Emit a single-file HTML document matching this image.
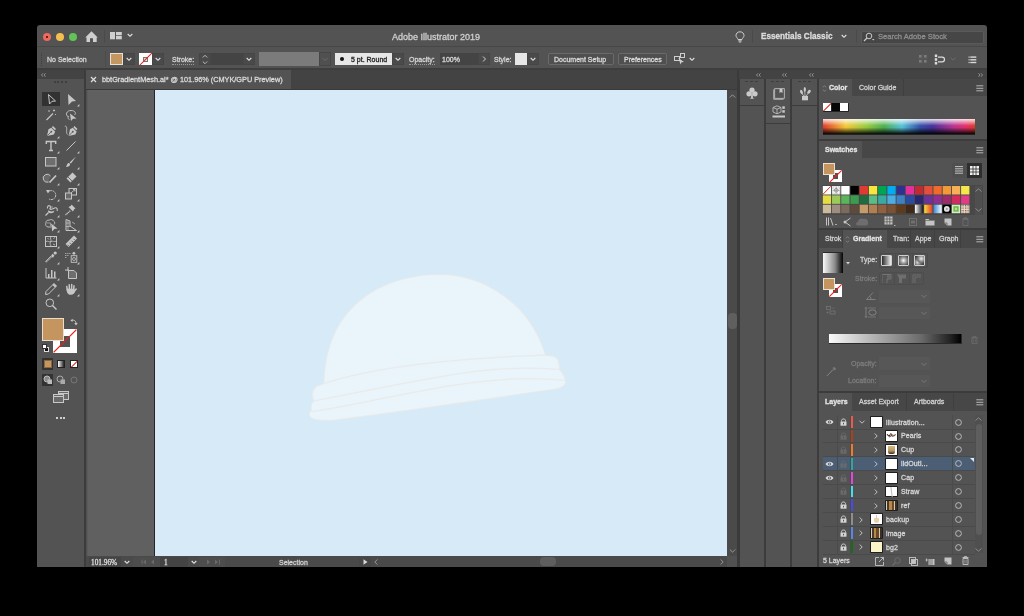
<!DOCTYPE html>
<html><head><meta charset="utf-8">
<style>
*{margin:0;padding:0;box-sizing:border-box}
html,body{width:1024px;height:616px;background:#000;overflow:hidden;font-family:"Liberation Sans",sans-serif;color:#d8d8d8}
.a{position:absolute}
.t{position:absolute;white-space:nowrap;font-size:7px;line-height:8px;will-change:transform;-webkit-text-stroke:0.3px currentColor}
svg{position:absolute;overflow:visible}
.dd{position:absolute;background:#4a4a4a;border:1px solid #464646}
.chev{position:absolute;width:4px;height:4px;border-right:1px solid #d0d0d0;border-bottom:1px solid #d0d0d0;transform:rotate(45deg)}
</style></head><body>
<!-- WINDOW BASE -->
<div class="a" style="left:37px;top:25px;width:950px;height:542px;background:#535353;border-radius:3px 3px 0 0"></div>

<!-- ============ TITLE BAR ============ -->
<div class="a" style="left:37px;top:46px;width:950px;height:1px;background:#474747"></div>
<div class="a" style="left:43px;top:33px;width:8px;height:8px;border-radius:50%;background:#ec6a5e"></div>
<div class="a" style="left:46px;top:36px;width:2px;height:2px;border-radius:50%;background:#4d0000"></div>
<div class="a" style="left:56px;top:33px;width:8px;height:8px;border-radius:50%;background:#f4bf4f"></div>
<div class="a" style="left:69px;top:33px;width:8px;height:8px;border-radius:50%;background:#61c454"></div>
<svg style="left:85px;top:31px" width="13" height="12" viewBox="0 0 13 12"><path d="M6.5 0.2 L12.7 6.5 L11.7 6.5 L11.7 11 L8 11 L8 7.2 L5 7.2 L5 11 L1.5 11 L1.5 6.5 L0.3 6.5 Z" fill="#cfcfcf"/></svg>
<div class="a" style="left:104px;top:30px;width:1px;height:13px;background:#4a4a4a"></div>
<svg style="left:110px;top:32px" width="12" height="8" viewBox="0 0 12 8"><rect x="0" y="0" width="5" height="7.3" fill="#cfcfcf"/><rect x="6" y="0" width="5.8" height="3.3" fill="#cfcfcf"/><rect x="6" y="4" width="5.8" height="3.3" fill="#cfcfcf"/></svg>
<svg style="left:127px;top:33px" width="6" height="5" viewBox="0 0 6 5"><path d="M0.7 1 L3 3.3 L5.3 1" stroke="#e2e2e2" stroke-width="1.15" fill="none"/></svg>
<div class="t" style="left:392px;top:31.8px;font-size:9px;line-height:11px;color:#cfcfcf">Adobe Illustrator 2019</div>
<!-- lightbulb -->
<svg style="left:735px;top:31px" width="10" height="12" viewBox="0 0 10 12"><path d="M5 0.8 C2.5 0.8 1 2.6 1 4.5 C1 6.2 2.6 7 3 8.5 L7 8.5 C7.4 7 9 6.2 9 4.5 C9 2.6 7.5 0.8 5 0.8 Z" stroke="#cfcfcf" stroke-width="1" fill="none"/><path d="M3.3 9.8 L6.7 9.8 M3.8 11 L6.2 11" stroke="#cfcfcf" stroke-width="1"/></svg>
<div class="a" style="left:752px;top:30px;width:1px;height:13px;background:#4a4a4a"></div>
<div class="t" style="left:761px;top:32.3px;font-size:8.2px;line-height:10px;font-weight:700;color:#dcdcdc">Essentials Classic</div>
<svg style="left:841px;top:34px" width="6" height="5" viewBox="0 0 6 5"><path d="M0.7 1 L3 3.3 L5.3 1" stroke="#e2e2e2" stroke-width="1.15" fill="none"/></svg>
<div class="a" style="left:856px;top:30px;width:1px;height:13px;background:#4a4a4a"></div>
<div class="a" style="left:861px;top:30.7px;width:122.5px;height:13px;background:#464646;border:1px solid #5a5a5a;border-radius:2px"></div>
<svg style="left:863px;top:32px" width="12" height="10" viewBox="0 0 12 10"><circle cx="6" cy="4" r="2.8" stroke="#c8c8c8" stroke-width="1" fill="none"/><path d="M4 6 L1 9" stroke="#c8c8c8" stroke-width="1.2"/><path d="M9 7 L11.5 7 L10.25 8.5 Z" fill="#c8c8c8"/></svg>
<div class="t" style="left:878px;top:32px;font-size:7.6px;line-height:10px;color:#8e8e8e">Search Adobe Stock</div>

<!-- ============ CONTROL BAR ============ -->
<div class="a" style="left:37px;top:68.3px;width:950px;height:1.8px;background:#3e3e3e"></div>
<div class="a" style="left:41px;top:53px;width:1px;height:13px;border-left:1px dotted #3e3e3e"></div>
<div class="t" style="left:47px;top:55.7px;color:#d4d4d4">No Selection</div>
<div class="a" style="left:105px;top:51px;width:1px;height:16px;background:#4c4c4c"></div>
<!-- fill -->
<div class="a" style="left:110px;top:53px;width:13px;height:12px;background:#c3975f;border:1px solid #e8e0d6"></div>
<div class="dd" style="left:123px;top:53px;width:12px;height:12px"></div>
<svg style="left:126px;top:57px" width="6" height="5" viewBox="0 0 6 5"><path d="M0.7 1 L3 3.3 L5.3 1" stroke="#e2e2e2" stroke-width="1.15" fill="none"/></svg>
<!-- stroke none -->
<div class="a" style="left:139px;top:53px;width:13px;height:12px;background:#fff;overflow:hidden">
 <div class="a" style="left:4px;top:3.5px;width:5px;height:5px;border:1px solid #777;background:#ddd"></div>
 <div class="a" style="left:-3px;top:5.5px;width:19px;height:1.2px;background:#e8231c;transform:rotate(-45deg)"></div>
</div>
<div class="dd" style="left:152px;top:53px;width:12px;height:12px"></div>
<svg style="left:155px;top:57px" width="6" height="5" viewBox="0 0 6 5"><path d="M0.7 1 L3 3.3 L5.3 1" stroke="#e2e2e2" stroke-width="1.15" fill="none"/></svg>
<div class="t" style="left:171.5px;top:55.7px;color:#d4d4d4;border-bottom:1px dotted #9a9a9a;line-height:8px">Stroke:</div>
<!-- stroke weight -->
<div class="dd" style="left:199px;top:53px;width:12px;height:12px"></div>
<svg style="left:202px;top:54px" width="6" height="11" viewBox="0 0 6 11"><path d="M0.8 3.5 L3 1.3 L5.2 3.5 M0.8 7.5 L3 9.7 L5.2 7.5" stroke="#c8c8c8" stroke-width="0.9" fill="none"/></svg>
<div class="a" style="left:211px;top:53px;width:32px;height:12px;background:#444"></div>
<div class="dd" style="left:243px;top:53px;width:12px;height:12px"></div>
<svg style="left:246px;top:57px" width="6" height="5" viewBox="0 0 6 5"><path d="M0.7 1 L3 3.3 L5.3 1" stroke="#e2e2e2" stroke-width="1.15" fill="none"/></svg>
<!-- variable width (disabled) -->
<div class="a" style="left:259px;top:52px;width:60px;height:14px;background:#7b7b7b"></div>
<div class="dd" style="left:319px;top:52px;width:12px;height:14px;background:#505050"></div>
<svg style="left:322px;top:57px" width="6" height="5" viewBox="0 0 6 5"><path d="M0.5 1 L3 3.5 L5.5 1" stroke="#6c6c6c" stroke-width="1" fill="none"/></svg>
<!-- brush -->
<div class="a" style="left:335px;top:53px;width:57px;height:12px;background:#e6e6e6"></div>
<div class="a" style="left:339.5px;top:57px;width:4px;height:4px;border-radius:50%;background:#111"></div>
<div class="t" style="left:351px;top:55.7px;color:#222">5 pt. Round</div>
<div class="dd" style="left:392px;top:53px;width:12px;height:12px"></div>
<svg style="left:395px;top:57px" width="6" height="5" viewBox="0 0 6 5"><path d="M0.7 1 L3 3.3 L5.3 1" stroke="#e2e2e2" stroke-width="1.15" fill="none"/></svg>
<div class="t" style="left:409px;top:55.7px;color:#d4d4d4;border-bottom:1px dotted #9a9a9a">Opacity:</div>
<div class="a" style="left:440px;top:53px;width:38px;height:12px;background:#444"></div>
<div class="t" style="left:442px;top:55.7px;color:#d8d8d8">100%</div>
<div class="dd" style="left:478px;top:53px;width:12px;height:12px"></div>
<svg style="left:482px;top:56px" width="5" height="6" viewBox="0 0 5 6"><path d="M1 0.5 L3.5 3 L1 5.5" stroke="#d0d0d0" stroke-width="1" fill="none"/></svg>
<div class="t" style="left:493.5px;top:55.7px;color:#d4d4d4">Style:</div>
<div class="a" style="left:515px;top:53px;width:12px;height:12px;background:#e6e6e6"></div>
<div class="dd" style="left:527px;top:53px;width:12px;height:12px"></div>
<svg style="left:530px;top:57px" width="6" height="5" viewBox="0 0 6 5"><path d="M0.7 1 L3 3.3 L5.3 1" stroke="#e2e2e2" stroke-width="1.15" fill="none"/></svg>
<div class="a" style="left:547.5px;top:53px;width:66px;height:12px;border:1px solid #6a6a6a;border-radius:2px;background:#4f4f4f"></div>
<div class="t" style="left:554px;top:55.7px;color:#d8d8d8">Document Setup</div>
<div class="a" style="left:617.5px;top:53px;width:49px;height:12px;border:1px solid #6a6a6a;border-radius:2px;background:#4f4f4f"></div>
<div class="t" style="left:623.5px;top:55.7px;color:#d8d8d8">Preferences</div>
<svg style="left:674px;top:53px" width="12" height="12" viewBox="0 0 12 12"><rect x="0.5" y="3.5" width="5" height="4" stroke="#cfcfcf" fill="none"/><rect x="6.5" y="0.5" width="4" height="4" stroke="#cfcfcf" fill="none"/><path d="M4.5 5 L10 9 L7.5 9.3 L6.5 11.5 Z" fill="#cfcfcf"/></svg>
<svg style="left:689px;top:57px" width="6" height="5" viewBox="0 0 6 5"><path d="M0.7 1 L3 3.3 L5.3 1" stroke="#e2e2e2" stroke-width="1.15" fill="none"/></svg>
<!-- right control icons -->
<svg style="left:918px;top:54px" width="10" height="10" viewBox="0 0 10 10"><g fill="#7c7c7c"><rect x="1" y="1" width="2.6" height="2.6"/><rect x="6" y="1" width="2.6" height="2.6"/><rect x="1" y="6" width="2.6" height="2.6"/><rect x="6" y="6" width="2.6" height="2.6"/></g><path d="M4.8 0V10M0 4.8H10" stroke="#5e5e5e" stroke-width="0.5"/></svg>
<svg style="left:934px;top:53.5px" width="13" height="11" viewBox="0 0 13 11"><g fill="#dcdcdc"><rect x="0.8" y="0.5" width="2.4" height="2.6"/><rect x="0.8" y="4.2" width="2.4" height="2.6"/><rect x="0.8" y="7.9" width="2.4" height="2.6"/></g><path d="M4 3.2 H8.2 A2.3 2.3 0 0 1 8.2 7.8 H4" stroke="#dcdcdc" stroke-width="1.2" fill="none"/></svg>
<svg style="left:950px;top:57px" width="6" height="4" viewBox="0 0 6 4"><path d="M0.5 0.7 L3 3 L5.5 0.7" stroke="#767676" stroke-width="0.7" fill="none"/></svg>
<svg style="left:967.5px;top:55.5px" width="9" height="8" viewBox="0 0 9 8"><g fill="#d8d8d8"><rect x="0.5" y="0.5" width="1.2" height="1.2"/><rect x="0.5" y="3.2" width="1.2" height="1.2"/><rect x="0.5" y="5.9" width="1.2" height="1.2"/><rect x="2.3" y="0.4" width="6" height="1.4"/><rect x="2.3" y="3.1" width="6" height="1.4"/><rect x="2.3" y="5.8" width="6" height="1.4"/></g></svg>

<!-- ============ LEFT TOOLBAR ============ -->
<div class="a" style="left:37px;top:70px;width:47px;height:9px;background:#434343"></div>

<div class="a" style="left:84px;top:70px;width:2px;height:497px;background:#3c3c3c"></div>
<div class="a" style="left:42px;top:92px;width:18px;height:14px;background:#323232"></div>
<svg style="left:43.5px;top:92.0px" width="14" height="14" viewBox="0 0 14 14"><path d="M4.5 2.5 L11.5 9 L8 9.3 L5.5 12 Z" stroke="#c6c6c6" stroke-width="1" fill="none" stroke-linejoin="miter"/></svg>
<svg style="left:63.5px;top:92.0px" width="14" height="14" viewBox="0 0 14 14"><path d="M4 2 L12 9 L8 9.5 L4.5 13 Z" fill="#c6c6c6"/></svg>
<svg style="left:76.9px;top:103.9px" width="2.4" height="2.4" viewBox="0 0 3 3"><path d="M3 0 L3 3 L0 3 Z" fill="#c8c8c8"/></svg>
<svg style="left:43.5px;top:107.8px" width="14" height="14" viewBox="0 0 14 14"><path d="M2.5 12 L9 5.5" stroke="#c6c6c6" stroke-width="1.3"/><path d="M4.5 2.5 L5.5 3.5 M5.5 2.5 L4.5 3.5 M10 1.5 L10 3.5 M9 2.5 L11 2.5 M11 6 L12 7" stroke="#c6c6c6" stroke-width="0.9"/></svg>
<svg style="left:63.5px;top:107.8px" width="14" height="14" viewBox="0 0 14 14"><path d="M4 8.5 C1 7 2.5 2.5 7 2.5 C11 2.5 12.5 5 10.5 7" stroke="#c6c6c6" stroke-width="0.9" fill="none"/><path d="M4.5 8 C3.5 10 4.5 11.5 5.5 11.5" stroke="#c6c6c6" stroke-width="0.9" fill="none"/><path d="M6 5.5 L12.5 10.5 L9 10.8 L7 13 Z" fill="#c6c6c6"/></svg>
<svg style="left:43.5px;top:123.6px" width="14" height="14" viewBox="0 0 14 14"><path d="M9 2 L12 5 L10.8 6.2 L7.8 3.2 Z" fill="#c6c6c6"/><path d="M7.3 3.8 L11.2 7.7 L9.8 10.5 L3 12 L4.5 5.2 Z" fill="#c6c6c6"/><path d="M3.2 11.8 L6.8 8.2" stroke="#535353" stroke-width="0.8"/><circle cx="7.3" cy="7.7" r="0.9" fill="#535353"/></svg>
<svg style="left:56.9px;top:135.5px" width="2.4" height="2.4" viewBox="0 0 3 3"><path d="M3 0 L3 3 L0 3 Z" fill="#c8c8c8"/></svg>
<svg style="left:63.5px;top:123.6px" width="14" height="14" viewBox="0 0 14 14"><g transform="translate(1.5,0)"><path d="M9 2 L12 5 L10.8 6.2 L7.8 3.2 Z" fill="#c6c6c6"/><path d="M7.3 3.8 L11.2 7.7 L9.8 10.5 L3 12 L4.5 5.2 Z" fill="#c6c6c6"/><path d="M3.2 11.8 L6.8 8.2" stroke="#535353" stroke-width="0.8"/><circle cx="7.3" cy="7.7" r="0.9" fill="#535353"/></g><path d="M3.5 10.5 C1.5 9 3.5 5.5 2.5 3 C2 1.8 1 2 0.8 2.5" stroke="#c6c6c6" stroke-width="0.8" fill="none"/></svg>
<svg style="left:43.5px;top:139.4px" width="14" height="14" viewBox="0 0 14 14"><path d="M2.3 5 L2.3 2.5 L11.7 2.5 L11.7 5 M7 2.5 L7 11.5 M5 11.5 L9 11.5" stroke="#c6c6c6" stroke-width="1.4" fill="none"/></svg>
<svg style="left:56.9px;top:151.3px" width="2.4" height="2.4" viewBox="0 0 3 3"><path d="M3 0 L3 3 L0 3 Z" fill="#c8c8c8"/></svg>
<svg style="left:63.5px;top:139.4px" width="14" height="14" viewBox="0 0 14 14"><path d="M2.5 11.5 L11.5 2.5" stroke="#c6c6c6" stroke-width="1"/></svg>
<svg style="left:76.9px;top:151.3px" width="2.4" height="2.4" viewBox="0 0 3 3"><path d="M3 0 L3 3 L0 3 Z" fill="#c8c8c8"/></svg>
<svg style="left:43.5px;top:155.2px" width="14" height="14" viewBox="0 0 14 14"><rect x="1.5" y="2.5" width="10.5" height="8.5" stroke="#c6c6c6" stroke-width="1" fill="#6e6e6e"/></svg>
<svg style="left:56.9px;top:167.1px" width="2.4" height="2.4" viewBox="0 0 3 3"><path d="M3 0 L3 3 L0 3 Z" fill="#c8c8c8"/></svg>
<svg style="left:63.5px;top:155.2px" width="14" height="14" viewBox="0 0 14 14"><path d="M12 1.5 L7 8.5 L5.5 7.5 Z" fill="#c6c6c6"/><path d="M5 8 C3 8 3 10.5 2 12 C4 12 6.5 11 6 9 Z" fill="#c6c6c6"/></svg>
<svg style="left:76.9px;top:167.1px" width="2.4" height="2.4" viewBox="0 0 3 3"><path d="M3 0 L3 3 L0 3 Z" fill="#c8c8c8"/></svg>
<svg style="left:43.5px;top:171.0px" width="14" height="14" viewBox="0 0 14 14"><path d="M6.5 5 A4 4 0 1 0 4.5 11" stroke="#c6c6c6" stroke-width="1" fill="#6a6a6a"/><path d="M12 4.5 L5.5 11.5" stroke="#c6c6c6" stroke-width="1.8"/></svg>
<svg style="left:56.9px;top:182.9px" width="2.4" height="2.4" viewBox="0 0 3 3"><path d="M3 0 L3 3 L0 3 Z" fill="#c8c8c8"/></svg>
<svg style="left:63.5px;top:171.0px" width="14" height="14" viewBox="0 0 14 14"><path d="M8.5 1.5 L12.5 5.5 L6.5 11.5 L2.5 7.5 Z" fill="#c6c6c6"/><path d="M4 6 L8 10" stroke="#535353" stroke-width="0.8"/></svg>
<svg style="left:76.9px;top:182.9px" width="2.4" height="2.4" viewBox="0 0 3 3"><path d="M3 0 L3 3 L0 3 Z" fill="#c8c8c8"/></svg>
<svg style="left:43.5px;top:186.8px" width="14" height="14" viewBox="0 0 14 14"><path d="M4 5 A4.5 4.5 0 1 1 5 12" stroke="#c6c6c6" stroke-width="1" fill="none" stroke-dasharray="2 0.6"/><path d="M2 3 L6 3 L4 6.5 Z" fill="#c6c6c6"/></svg>
<svg style="left:56.9px;top:198.7px" width="2.4" height="2.4" viewBox="0 0 3 3"><path d="M3 0 L3 3 L0 3 Z" fill="#c8c8c8"/></svg>
<svg style="left:63.5px;top:186.8px" width="14" height="14" viewBox="0 0 14 14"><rect x="5" y="1.5" width="7.5" height="6.5" stroke="#c6c6c6" fill="none"/><rect x="1.5" y="6" width="6" height="6" stroke="#c6c6c6" fill="#6a6a6a"/><path d="M7 6 L11 2.5 M9 2.5 L11 2.5 L11 4.5" stroke="#c6c6c6" stroke-width="0.9" fill="none"/></svg>
<svg style="left:76.9px;top:198.7px" width="2.4" height="2.4" viewBox="0 0 3 3"><path d="M3 0 L3 3 L0 3 Z" fill="#c8c8c8"/></svg>
<svg style="left:43.5px;top:202.6px" width="14" height="14" viewBox="0 0 14 14"><path d="M3.5 5.5 C3 3.5 4.5 2 6 3 C6.8 3.6 6.5 5 5.8 5.8 C7.5 7.5 9.5 5.2 11.3 4.8 C13 4.5 13.8 6.5 13 8" stroke="#c6c6c6" stroke-width="1.1" fill="none"/><path d="M4.5 7 C6 9 8.5 8.5 10.5 7.5 L9.5 9.5 C7.5 10.5 5.5 10.5 4 9 Z" fill="#c6c6c6"/><path d="M1.5 12.5 L4.5 9.5" stroke="#c6c6c6" stroke-width="1.2"/><circle cx="8" cy="4" r="0.7" fill="#c6c6c6"/></svg>
<svg style="left:56.9px;top:214.5px" width="2.4" height="2.4" viewBox="0 0 3 3"><path d="M3 0 L3 3 L0 3 Z" fill="#c8c8c8"/></svg>
<svg style="left:63.5px;top:202.6px" width="14" height="14" viewBox="0 0 14 14"><path d="M7.5 1.5 L11.5 5.5 L10.3 6 L9 8.5 L4.5 4 L7 2.7 Z" fill="#c6c6c6"/><path d="M6.3 7.7 L1.5 12" stroke="#c6c6c6" stroke-width="1.4" stroke-dasharray="1.2 0.6"/></svg>
<svg style="left:76.9px;top:214.5px" width="2.4" height="2.4" viewBox="0 0 3 3"><path d="M3 0 L3 3 L0 3 Z" fill="#c8c8c8"/></svg>
<svg style="left:43.5px;top:218.4px" width="14" height="14" viewBox="0 0 14 14"><path d="M2 5 C1.5 3 3.5 1.8 5 2.2 C6.5 1 9 1.5 9.7 3.2 C11 3.8 11 5.6 10 6.5 M2 5 C1 6.5 2 8.8 4 9 L7 9" stroke="#c6c6c6" stroke-width="0.9" fill="none"/><path d="M3 5 H6.5 V8" stroke="#c6c6c6" stroke-width="0.6" fill="none"/><path d="M7 5.5 L13.5 10.5 L10.3 11 L8.3 13.5 Z" fill="#c6c6c6"/></svg>
<svg style="left:56.9px;top:230.3px" width="2.4" height="2.4" viewBox="0 0 3 3"><path d="M3 0 L3 3 L0 3 Z" fill="#c8c8c8"/></svg>
<svg style="left:63.5px;top:218.4px" width="14" height="14" viewBox="0 0 14 14"><path d="M2 1.5 L2 12.5 L12.5 12.5 L6 8 L6 3 Z" stroke="#c6c6c6" fill="none"/><path d="M2 5 L6 5 M2 8.5 L6 8.5 M4 2 L4 12.5" stroke="#c6c6c6" stroke-width="0.7"/><path d="M8 4 L11 6" stroke="#c6c6c6" stroke-width="0.7"/></svg>
<svg style="left:76.9px;top:230.3px" width="2.4" height="2.4" viewBox="0 0 3 3"><path d="M3 0 L3 3 L0 3 Z" fill="#c8c8c8"/></svg>
<svg style="left:43.5px;top:234.2px" width="14" height="14" viewBox="0 0 14 14"><rect x="1.5" y="2.5" width="11" height="10" stroke="#c6c6c6" stroke-width="1" fill="none"/><path d="M2 7.5 C4 6.5 5 8.5 7 7.5 C9 6.5 10 8.5 12.5 7 M7 2.5 C5.5 4.5 8 6 6.5 8 C5 10 7.5 11 6.5 12.5 M3.5 4 L5 5.5 M9.5 4.5 L11 3.5 M9 10 L11 11" stroke="#c6c6c6" stroke-width="0.8" fill="none"/></svg>
<svg style="left:56.9px;top:246.1px" width="2.4" height="2.4" viewBox="0 0 3 3"><path d="M3 0 L3 3 L0 3 Z" fill="#c8c8c8"/></svg>
<svg style="left:63.5px;top:234.2px" width="14" height="14" viewBox="0 0 14 14"><path d="M1.5 10 L10 1.5 L13 4.5 L4.5 13 Z" fill="#c6c6c6"/><path d="M3.6 10.8 L4.6 11.8 M5.6 8.8 L6.6 9.8 M7.6 6.8 L8.6 7.8 M9.6 4.8 L10.6 5.8" stroke="#535353" stroke-width="1"/></svg>
<svg style="left:76.9px;top:246.1px" width="2.4" height="2.4" viewBox="0 0 3 3"><path d="M3 0 L3 3 L0 3 Z" fill="#c8c8c8"/></svg>
<svg style="left:43.5px;top:250.0px" width="14" height="14" viewBox="0 0 14 14"><circle cx="11.2" cy="3" r="1.6" fill="#c6c6c6"/><path d="M8.2 4.2 L10 6 M7.6 5.5 L9.4 7.3" stroke="#c6c6c6" stroke-width="1.3"/><path d="M8.3 6.2 L2.6 11.9 C2 12.5 1.3 11.8 1.9 11.2 L7.6 5.5" stroke="#c6c6c6" stroke-width="0.9" fill="none"/></svg>
<svg style="left:56.9px;top:261.9px" width="2.4" height="2.4" viewBox="0 0 3 3"><path d="M3 0 L3 3 L0 3 Z" fill="#c8c8c8"/></svg>
<svg style="left:63.5px;top:250.0px" width="14" height="14" viewBox="0 0 14 14"><g fill="#c6c6c6"><rect x="1.3" y="3" width="1" height="1"/><rect x="3.4" y="3" width="1" height="1"/><rect x="5.4" y="3" width="1" height="1"/><rect x="1.3" y="5" width="1" height="1"/><rect x="3.4" y="5" width="1" height="1"/><rect x="1.3" y="7" width="1" height="1"/></g><rect x="7.2" y="5.7" width="5.6" height="6.6" stroke="#c6c6c6" stroke-width="0.9" fill="none"/><circle cx="9.9" cy="3.3" r="1.4" fill="#c6c6c6"/><circle cx="10" cy="9" r="1.5" stroke="#c6c6c6" stroke-width="0.8" fill="none"/></svg>
<svg style="left:76.9px;top:261.9px" width="2.4" height="2.4" viewBox="0 0 3 3"><path d="M3 0 L3 3 L0 3 Z" fill="#c8c8c8"/></svg>
<svg style="left:43.5px;top:265.8px" width="14" height="14" viewBox="0 0 14 14"><path d="M2 2 L2 12 L12.5 12" stroke="#c6c6c6" fill="none"/><rect x="4" y="8" width="1.5" height="4" fill="#c6c6c6"/><rect x="7" y="4" width="1.5" height="8" fill="#c6c6c6"/><rect x="10" y="5.5" width="1.5" height="6.5" fill="#c6c6c6"/></svg>
<svg style="left:56.9px;top:277.7px" width="2.4" height="2.4" viewBox="0 0 3 3"><path d="M3 0 L3 3 L0 3 Z" fill="#c8c8c8"/></svg>
<svg style="left:63.5px;top:265.8px" width="14" height="14" viewBox="0 0 14 14"><path d="M4 1 L4 5 M1 4 L5 4" stroke="#c6c6c6"/><path d="M4.5 4.5 L10 4.5 L12.5 7 L12.5 12.5 L4.5 12.5 Z" stroke="#c6c6c6" fill="#6e6e6e"/></svg>
<svg style="left:43.5px;top:281.6px" width="14" height="14" viewBox="0 0 14 14"><path d="M10 1.5 L12.5 4 L4.5 12 L1.5 12.5 L2 9.5 Z" stroke="#c6c6c6" fill="none"/><path d="M8.5 3 L11 5.5 L12.5 4 L10 1.5 Z" fill="#c6c6c6"/></svg>
<svg style="left:56.9px;top:293.5px" width="2.4" height="2.4" viewBox="0 0 3 3"><path d="M3 0 L3 3 L0 3 Z" fill="#c8c8c8"/></svg>
<svg style="left:63.5px;top:281.6px" width="14" height="14" viewBox="0 0 14 14"><g stroke="#c6c6c6" stroke-width="1.5" stroke-linecap="round"><path d="M3.3 8 L2.8 4.5"/><path d="M5.4 7 L5.2 2.8"/><path d="M7.6 7 L7.7 2.5"/><path d="M9.7 7.5 L10 3.8"/><path d="M10.5 9 L12.2 7"/></g><path d="M2.6 6.5 C2.6 9.5 3 12.8 6.8 12.8 C9.5 12.8 10.5 11 11.2 9.5 L10.3 7 L2.6 6.5 Z" fill="#c6c6c6"/></svg>
<svg style="left:76.9px;top:293.5px" width="2.4" height="2.4" viewBox="0 0 3 3"><path d="M3 0 L3 3 L0 3 Z" fill="#c8c8c8"/></svg>
<svg style="left:43.5px;top:297.4px" width="14" height="14" viewBox="0 0 14 14"><circle cx="5.8" cy="5.8" r="3.8" stroke="#c6c6c6" stroke-width="1" fill="none"/><path d="M8.5 8.5 L12.5 12.5" stroke="#c6c6c6" stroke-width="1.5"/></svg>
<!-- grip -->
<div class="a" style="left:54px;top:81px;width:13px;height:2px;border-top:2px dotted #3f3f3f"></div>
<!-- fill/stroke big -->
<div class="a" style="left:53px;top:329px;width:23.5px;height:23.5px;background:#fff"></div>
<div class="a" style="left:59.5px;top:336px;width:10.5px;height:10.5px;background:#535353"></div>
<svg style="left:53px;top:329px" width="24" height="24" viewBox="0 0 24 24"><path d="M0.6 23.4 L23.4 0.6" stroke="#e5231d" stroke-width="1.3"/></svg>
<div class="a" style="left:41.5px;top:318px;width:22.5px;height:22.5px;background:#c4955f;border:1px solid #e9ddcd"></div>
<svg style="left:70px;top:318px" width="8" height="8" viewBox="0 0 8 8"><path d="M1.5 2.5 C3.5 1.5 6 2.5 6 5.5" stroke="#c8c8c8" stroke-width="1" fill="none"/><path d="M0.5 2.5 L2.5 0.8 L2.5 4 Z M4.3 5 L7.7 5 L6 7.5 Z" fill="#c8c8c8"/></svg>
<div class="a" style="left:44px;top:346.5px;width:5px;height:5px;background:#111;border:1px solid #ddd"></div>
<div class="a" style="left:41.5px;top:344px;width:5px;height:5px;background:#fff;border:1px solid #333"></div>
<!-- mode buttons -->
<div class="a" style="left:42px;top:358px;width:11px;height:12px;background:#333"></div>
<div class="a" style="left:43.5px;top:360px;width:8px;height:8px;background:#c4955f;border:1px solid #8a6a40"></div>
<div class="a" style="left:56.5px;top:360px;width:8px;height:8px;background:linear-gradient(90deg,#fff,#222);border:1px solid #222"></div>
<div class="a" style="left:69.5px;top:360px;width:8px;height:8px;background:#fff;border:1px solid #222;overflow:hidden"><div class="a" style="left:-2px;top:2.5px;width:10px;height:1px;background:#e5231d;transform:rotate(-45deg)"></div></div>
<!-- draw modes -->
<div class="a" style="left:42px;top:374px;width:11px;height:12px;background:#333"></div>
<svg style="left:43px;top:375px" width="10" height="10" viewBox="0 0 10 10"><circle cx="4" cy="4" r="3" stroke="#bbb" fill="#888"/><rect x="4.5" y="4.5" width="4.5" height="4.5" fill="#bbb"/></svg>
<svg style="left:56px;top:375px" width="10" height="10" viewBox="0 0 10 10"><circle cx="4" cy="4" r="3" stroke="#aaa" fill="none"/><rect x="4.5" y="4.5" width="4.5" height="4.5" fill="#aaa"/></svg>
<svg style="left:69px;top:375px" width="10" height="10" viewBox="0 0 10 10"><circle cx="5" cy="5" r="3" stroke="#777" fill="none"/></svg>
<!-- screen mode -->
<svg style="left:52.5px;top:390.5px" width="16" height="12" viewBox="0 0 16 12"><rect x="5.5" y="0.5" width="10" height="8" stroke="#c8c8c8" fill="#6a6a6a"/><rect x="0.5" y="3.5" width="10" height="8" stroke="#c8c8c8" fill="#6a6a6a"/><path d="M1 5.5 H10 M6 2.5 H15" stroke="#c8c8c8"/></svg>
<!-- dots -->
<div class="a" style="left:56px;top:417px;width:2px;height:2px;background:#d0d0d0"></div>
<div class="a" style="left:59.5px;top:417px;width:2px;height:2px;background:#d0d0d0"></div>
<div class="a" style="left:63px;top:417px;width:2px;height:2px;background:#d0d0d0"></div>


<!-- ============ DOC TAB BAR ============ -->
<div class="a" style="left:86px;top:70px;width:651px;height:19px;background:#434343"></div>
<div class="a" style="left:86px;top:70px;width:205px;height:19px;background:#535353"></div>
<div class="a" style="left:86px;top:89px;width:651px;height:1px;background:#3a3a3a"></div>
<svg style="left:90px;top:76px" width="7" height="7" viewBox="0 0 7 7"><path d="M1 1 L6 6 M6 1 L1 6" stroke="#e0e0e0" stroke-width="1.2"/></svg>
<div class="t" style="left:101.5px;top:76px;font-size:7.3px;color:#d8d8d8">bbtGradientMesh.ai* @ 101.96% (CMYK/GPU Preview)</div>

<!-- ============ CANVAS ============ -->
<div class="a" style="left:86px;top:90px;width:641px;height:466px;background:#606060"></div>
<div class="a" style="left:86px;top:90px;width:2px;height:466px;background:linear-gradient(90deg,#4a4a4a,#606060)"></div>
<div class="a" style="left:154px;top:90px;width:1px;height:466px;background:#262626"></div>
<div class="a" style="left:155px;top:90px;width:572px;height:466px;background:#d6eaf8"></div>
<div class="a" style="left:727px;top:90px;width:10px;height:466px;background:#4a4a4a"></div>
<div class="a" style="left:728px;top:313px;width:9px;height:16px;border-radius:4px;background:#5f5f5f"></div>
<!-- status bar -->
<div class="a" style="left:86px;top:556px;width:651px;height:11px;background:#4a4a4a"></div>
<div class="a" style="left:89px;top:556.5px;width:32px;height:10px;background:#444"></div>
<div class="t" style="left:90.5px;top:558.7px;font-size:7.3px;color:#dcdcdc;font-family:'Liberation Serif',serif">101.96%</div>
<svg style="left:124px;top:560px" width="6" height="5" viewBox="0 0 6 5"><path d="M0.7 1 L3 3.3 L5.3 1" stroke="#e2e2e2" stroke-width="1.15" fill="none"/></svg>
<div class="a" style="left:132.5px;top:556.5px;width:27px;height:10px;background:#4d4d4d"></div>
<svg style="left:141px;top:558.5px" width="15" height="6" viewBox="0 0 15 6"><rect x="0.5" y="0.5" width="1" height="5" fill="#6a6a6a"/><path d="M5 0.5 L2 3 L5 5.5Z M13 0.5 L10 3 L13 5.5Z" fill="#6a6a6a"/></svg>
<div class="a" style="left:160px;top:556.5px;width:28px;height:10px;background:#444"></div>
<div class="t" style="left:163.5px;top:558.7px;font-size:7.3px;color:#dcdcdc;font-family:'Liberation Serif',serif">1</div>
<svg style="left:190.5px;top:560px" width="6" height="5" viewBox="0 0 6 5"><path d="M0.7 1 L3 3.3 L5.3 1" stroke="#e2e2e2" stroke-width="1.15" fill="none"/></svg>
<div class="a" style="left:199px;top:556.5px;width:26px;height:10px;background:#4d4d4d"></div>
<svg style="left:206px;top:558.5px" width="15" height="6" viewBox="0 0 15 6"><path d="M1 0.5 L4 3 L1 5.5Z M9 0.5 L12 3 L9 5.5Z" fill="#6a6a6a"/><rect x="13" y="0.5" width="1" height="5" fill="#6a6a6a"/></svg>
<div class="t" style="left:278.5px;top:558.5px;color:#cfcfcf">Selection</div>
<div class="a" style="left:359px;top:556.5px;width:12px;height:10px;background:#474747"></div>
<svg style="left:362.5px;top:558.5px" width="5" height="6" viewBox="0 0 5 6"><path d="M0.5 0.3 L4.5 3 L0.5 5.7Z" fill="#d8d8d8"/></svg>
<svg style="left:374px;top:558.5px" width="4" height="6" viewBox="0 0 4 6"><path d="M3.3 0.5 L0.8 3 L3.3 5.5" stroke="#a0a0a0" stroke-width="0.9" fill="none"/></svg>
<div class="a" style="left:540px;top:557.3px;width:16px;height:8.5px;border-radius:4px;background:#5e5e5e"></div>
<svg style="left:720px;top:558.5px" width="4" height="6" viewBox="0 0 4 6"><path d="M0.7 0.5 L3.2 3 L0.7 5.5" stroke="#a0a0a0" stroke-width="0.9" fill="none"/></svg>
<div class="a" style="left:727px;top:556px;width:10px;height:11px;background:#515151"></div>
<svg style="left:729px;top:548.5px" width="7" height="4" viewBox="0 0 7 4"><path d="M0.8 0.5 L3.5 3.2 L6.2 0.5" stroke="#a0a0a0" stroke-width="0.9" fill="none"/></svg>
<svg style="left:729px;top:93.5px" width="7" height="4" viewBox="0 0 7 4"><path d="M0.8 3.5 L3.5 0.8 L6.2 3.5" stroke="#a0a0a0" stroke-width="0.9" fill="none"/></svg>
<!-- cap -->
<svg style="left:155px;top:90px" width="572" height="466" viewBox="155 90 572 466">
 <defs><filter id="bl" x="-5%" y="-5%" width="110%" height="110%"><feGaussianBlur stdDeviation="0.5"/></filter></defs>
 <g filter="url(#bl)" stroke="#e8e8e6" stroke-opacity="0.8" stroke-width="1.2" fill="#e9f4fb">
  <path d="M323.8 384.5 C325 294 398 274.3 439.7 274.3 C482 274.3 530 302 545.8 356 Z"/>
  <path d="M318 385.5 C370 368 440 359 545.5 355.2 C551 355.5 555 356 557 358.5 C559 361 559.5 366 559.5 369.5 C562 372 565 377 565.5 381 C566 385 562 388 556 389 C480 400 400 412 335 420 C322 421 311 420 309.5 416 C308.5 413 309.5 411 311.5 411 C310.5 406 311 403 314 401 C311.5 397 311 390 318 385.5 Z"/>
  <path d="M314 401 C444 375.5 489.5 363.5 559.5 369.5" fill="none"/>
  <path d="M311.5 411.5 C371.5 404.5 475 370.5 565 380.5" fill="none"/>
 </g>
</svg>

<!-- ============ DOCK + RIGHT ============ -->
<div class="a" style="left:819px;top:70px;width:168px;height:497px;background:#535353"></div>
<div class="a" style="left:740px;top:79px;width:77px;height:488px;background:#535353"></div>
<div class="a" style="left:737px;top:70px;width:3px;height:497px;background:#3a3a3a"></div>
<div class="a" style="left:739px;top:70px;width:80px;height:9px;background:#434343"></div>
<svg style="left:756.0px;top:72.8px" width="5" height="4" viewBox="0 0 5 4"><path d="M2 0.3 L0.5 2 L2 3.7 M4.5 0.3 L3 2 L4.5 3.7" stroke="#b0b0b0" stroke-width="0.7" fill="none"/></svg>
<svg style="left:782.0px;top:72.8px" width="5" height="4" viewBox="0 0 5 4"><path d="M2 0.3 L0.5 2 L2 3.7 M4.5 0.3 L3 2 L4.5 3.7" stroke="#b0b0b0" stroke-width="0.7" fill="none"/></svg>
<svg style="left:808.5px;top:72.8px" width="5" height="4" viewBox="0 0 5 4"><path d="M2 0.3 L0.5 2 L2 3.7 M4.5 0.3 L3 2 L4.5 3.7" stroke="#b0b0b0" stroke-width="0.7" fill="none"/></svg>
<svg style="left:977.5px;top:72.8px" width="5" height="4" viewBox="0 0 5 4"><path d="M0.5 0.3 L2 2 L0.5 3.7 M3 0.3 L4.5 2 L3 3.7" stroke="#b0b0b0" stroke-width="0.7" fill="none"/></svg>
<svg style="left:41.0px;top:72.8px" width="5" height="4" viewBox="0 0 5 4"><path d="M2 0.3 L0.5 2 L2 3.7 M4.5 0.3 L3 2 L4.5 3.7" stroke="#b0b0b0" stroke-width="0.7" fill="none"/></svg>
<div class="a" style="left:764px;top:79px;width:2px;height:488px;background:#3c3c3c"></div>
<div class="a" style="left:790px;top:79px;width:2.4px;height:488px;background:#3c3c3c"></div>
<div class="a" style="left:817px;top:79px;width:2px;height:488px;background:#3c3c3c"></div>
<div class="a" style="left:740px;top:105px;width:24px;height:1px;background:#3c3c3c"></div>
<div class="a" style="left:766px;top:123px;width:24px;height:1px;background:#3c3c3c"></div>
<div class="a" style="left:792px;top:105px;width:25px;height:1px;background:#3c3c3c"></div>
<div class="a" style="left:745px;top:81px;width:13px;height:2px;border-top:1.5px dashed #3e3e3e"></div>
<div class="a" style="left:771px;top:81px;width:13px;height:2px;border-top:1.5px dashed #3e3e3e"></div>
<div class="a" style="left:797.5px;top:81px;width:13px;height:2px;border-top:1.5px dashed #3e3e3e"></div>
<svg style="left:746px;top:87px" width="12" height="13" viewBox="0 0 12 13"><circle cx="6" cy="3.2" r="2.6" fill="#cacaca"/><circle cx="3" cy="6.8" r="2.6" fill="#cacaca"/><circle cx="9" cy="6.8" r="2.6" fill="#cacaca"/><path d="M5.3 6 L6.7 6 L7 11 L8.5 11.7 L3.5 11.7 L5 11 Z" fill="#cacaca"/></svg>
<svg style="left:773px;top:88px" width="12" height="12" viewBox="0 0 12 12"><path d="M0.7 1.5 L0.7 11.3 L10.5 11.3" stroke="#c8c8c8" stroke-width="0.8" fill="none"/><rect x="1.7" y="0.7" width="9.6" height="9.6" stroke="#c8c8c8" stroke-width="0.8" fill="none"/><path d="M6.5 0.7 L6.5 5 L8 4 L9.5 5 L9.5 0.7 Z" fill="#c8c8c8"/></svg>
<svg style="left:772px;top:105px" width="14" height="14" viewBox="0 0 14 14"><path d="M5 0.8 L9 2.5 L9 7 L5 8.8 L1 7 L1 2.5 Z M1 2.5 L5 4.2 L9 2.5 M5 4.2 L5 8.8" stroke="#c8c8c8" stroke-width="0.8" fill="none"/><rect x="10.3" y="1.3" width="2.5" height="2.5" fill="#c8c8c8"/><rect x="10.3" y="5.2" width="2.5" height="2.5" fill="#c8c8c8"/><rect x="0.5" y="10.5" width="12.5" height="2" fill="#c8c8c8"/></svg>
<svg style="left:799px;top:86px" width="13" height="15" viewBox="0 0 13 15"><rect x="3" y="10" width="6" height="4.3" fill="#cacaca"/><ellipse cx="2.5" cy="6" rx="1.3" ry="2.3" transform="rotate(-25 2.5 6)" fill="#cacaca"/><path d="M3.3 8 L4.8 10" stroke="#cacaca" stroke-width="0.8"/><ellipse cx="5.8" cy="3.5" rx="1.1" ry="2.6" fill="#cacaca"/><path d="M5.8 6 L6 10" stroke="#cacaca" stroke-width="0.8"/><ellipse cx="10" cy="5.8" rx="1.4" ry="2.2" transform="rotate(40 10 5.8)" fill="#cacaca"/><path d="M8.8 7.5 L7.3 10" stroke="#cacaca" stroke-width="0.8"/></svg>
<div class="a" style="left:819px;top:70px;width:168px;height:9px;background:#434343"></div>
<svg style="left:977.5px;top:72.8px" width="5" height="4" viewBox="0 0 5 4"><path d="M0.5 0.3 L2 2 L0.5 3.7 M3 0.3 L4.5 2 L3 3.7" stroke="#b0b0b0" stroke-width="0.7" fill="none"/></svg>
<div class="a" style="left:819px;top:79px;width:168px;height:17px;background:#474747"></div>
<div class="a" style="left:819px;top:79px;width:33px;height:17px;background:#535353"></div>
<div class="t" style="left:829px;top:84px;font-weight:700;color:#e4e4e4">Color</div>
<svg style="left:822px;top:84.5px" width="5" height="7" viewBox="0 0 5 7"><path d="M0.8 2.3 L2.5 0.8 L4.2 2.3 M0.8 4.7 L2.5 6.2 L4.2 4.7" stroke="#8a8a8a" stroke-width="0.8" fill="none"/></svg>
<div class="a" style="left:903px;top:79px;width:1px;height:17px;background:#3f3f3f"></div>
<div class="t" style="left:858.5px;top:84px;font-weight:400;color:#cfcfcf">Color Guide</div>
<svg style="left:975.5px;top:84.5px" width="8" height="7" viewBox="0 0 8 7"><path d="M0.3 0.8H7.3M0.3 3.3H7.3M0.3 5.8H7.3" stroke="#cfcfcf" stroke-width="0.8"/></svg>
<div class="a" style="left:822.5px;top:102.5px;width:26px;height:9px;background:#222;border-radius:1px"></div>
<div class="a" style="left:823px;top:103px;width:8px;height:8px;background:#fff;overflow:hidden"><div class="a" style="left:-2px;top:3.5px;width:12px;height:1px;background:#e5231d;transform:rotate(-45deg)"></div></div>
<div class="a" style="left:831.5px;top:103px;width:8px;height:8px;background:#050505"></div>
<div class="a" style="left:840px;top:103px;width:8px;height:8px;background:#fff"></div>
<div class="a" style="left:822.5px;top:118.5px;width:152.5px;height:16px;background:#222"></div>
<div class="a" style="left:823px;top:119px;width:151.5px;height:15px;background:linear-gradient(90deg,#e23b2d 0%,#f5c93a 15%,#9ccc40 28%,#4fb050 40%,#58c3d9 52%,#3450a8 64%,#48329a 72%,#b93590 86%,#e4306a 94%,#e03a2a 100%)"></div>
<div class="a" style="left:823px;top:119px;width:151.5px;height:15px;background:linear-gradient(180deg,rgba(255,255,255,0.85) 0%,rgba(255,255,255,0) 45%,rgba(0,0,0,0) 55%,rgba(0,0,0,0.95) 100%)"></div>
<div class="a" style="left:819px;top:138.5px;width:168px;height:2px;background:#3c3c3c"></div>
<div class="a" style="left:819px;top:140.5px;width:168px;height:17.5px;background:#474747"></div>
<div class="a" style="left:819px;top:140.5px;width:43px;height:17.5px;background:#535353"></div>
<div class="t" style="left:824.5px;top:145.5px;font-weight:700;color:#e4e4e4">Swatches</div>
<svg style="left:975.5px;top:146.5px" width="8" height="7" viewBox="0 0 8 7"><path d="M0.3 0.8H7.3M0.3 3.3H7.3M0.3 5.8H7.3" stroke="#cfcfcf" stroke-width="0.8"/></svg>
<div class="a" style="left:829px;top:169.5px;width:12.5px;height:12.5px;background:#fff"></div>
<div class="a" style="left:832.5px;top:173px;width:5.5px;height:5.5px;background:#535353"></div>
<svg style="left:829px;top:169.5px" width="13" height="13" viewBox="0 0 13 13"><path d="M0.3 12.7 L12.7 0.3" stroke="#e5231d" stroke-width="1.1"/></svg>
<div class="a" style="left:822.5px;top:162.5px;width:12.5px;height:12.5px;background:#c4955f;border:1px solid #ecdfcd"></div>
<div class="a" style="left:951.5px;top:162.5px;width:15px;height:15px;background:#4f4f4f"></div>
<svg style="left:955px;top:166px" width="8" height="8" viewBox="0 0 8 8"><path d="M0 0.6H8M0 2.8H8M0 5H8M0 7.2H8" stroke="#cfcfcf" stroke-width="0.9"/></svg>
<div class="a" style="left:967px;top:162.5px;width:15px;height:15px;background:#2e2e2e"></div>
<svg style="left:970px;top:165.5px" width="9" height="9" viewBox="0 0 9 9"><rect x="0" y="0" width="9" height="9" fill="#f0f0f0"/><path d="M3 0V9M6 0V9M0 3H9M0 6H9" stroke="#2e2e2e" stroke-width="0.8"/></svg>
<div class="a" style="left:822px;top:185px;width:160.5px;height:29.5px;background:#484848"></div>
<div class="a" style="left:974.5px;top:185.5px;width:7.5px;height:29px;background:#4f4f4f"></div>
<svg style="left:822px;top:185px" width="153" height="30" viewBox="822 185 153 30"><defs><linearGradient id="g1"><stop offset="0" stop-color="#fff"/><stop offset="1" stop-color="#111"/></linearGradient><linearGradient id="g2"><stop offset="0" stop-color="#f8e040"/><stop offset="0.5" stop-color="#f08a30"/><stop offset="1" stop-color="#e03a30"/></linearGradient><linearGradient id="g3"><stop offset="0" stop-color="#3a86d0"/><stop offset="0.6" stop-color="#a8d0f0"/><stop offset="1" stop-color="#fff"/></linearGradient><pattern id="p3" width="2.5" height="2.5" patternUnits="userSpaceOnUse"><rect width="2.5" height="2.5" fill="#e8dccc"/><rect width="1.3" height="1.3" fill="#8a5a3a"/></pattern></defs><rect x="822.80" y="186.00" width="8.3" height="8.5" fill="#fff"/><path d="M823.10 194.20 L830.80 186.30" stroke="#e5231d" stroke-width="1"/><rect x="832.02" y="186.00" width="8.3" height="8.5" fill="#f2f2f2"/><circle cx="836.17" cy="190.25" r="1.8" stroke="#777" stroke-width="0.6" fill="none"/><path d="M836.17 187.00V193.50M833.02 190.25H839.32" stroke="#777" stroke-width="0.6"/><rect x="832.82" y="186.80" width="6.70" height="6.90" stroke="#aaa" stroke-width="0.5" fill="none" stroke-dasharray="1.5 1"/><rect x="841.24" y="186.00" width="8.3" height="8.5" fill="#ffffff"/><rect x="850.46" y="186.00" width="8.3" height="8.5" fill="#000000"/><rect x="859.68" y="186.00" width="8.3" height="8.5" fill="#e03a33"/><rect x="868.90" y="186.00" width="8.3" height="8.5" fill="#f8e63c"/><rect x="878.12" y="186.00" width="8.3" height="8.5" fill="#00a551"/><rect x="887.34" y="186.00" width="8.3" height="8.5" fill="#00adef"/><rect x="896.56" y="186.00" width="8.3" height="8.5" fill="#2e3192"/><rect x="905.78" y="186.00" width="8.3" height="8.5" fill="#e3309a"/><rect x="915.00" y="186.00" width="8.3" height="8.5" fill="#bf2a33"/><rect x="924.22" y="186.00" width="8.3" height="8.5" fill="#e34f3a"/><rect x="933.44" y="186.00" width="8.3" height="8.5" fill="#ef6a2c"/><rect x="942.66" y="186.00" width="8.3" height="8.5" fill="#f4993a"/><rect x="951.88" y="186.00" width="8.3" height="8.5" fill="#f5b058"/><rect x="961.10" y="186.00" width="8.3" height="8.5" fill="#f4e84a"/><rect x="822.80" y="195.35" width="8.3" height="8.5" fill="#e3dc42"/><rect x="832.02" y="195.35" width="8.3" height="8.5" fill="#9dc95b"/><rect x="841.24" y="195.35" width="8.3" height="8.5" fill="#5bb45a"/><rect x="850.46" y="195.35" width="8.3" height="8.5" fill="#3b9c4f"/><rect x="859.68" y="195.35" width="8.3" height="8.5" fill="#1f6c3f"/><rect x="868.90" y="195.35" width="8.3" height="8.5" fill="#5cbc85"/><rect x="878.12" y="195.35" width="8.3" height="8.5" fill="#3aa9a1"/><rect x="887.34" y="195.35" width="8.3" height="8.5" fill="#4cade3"/><rect x="896.56" y="195.35" width="8.3" height="8.5" fill="#3b81c3"/><rect x="905.78" y="195.35" width="8.3" height="8.5" fill="#2b4c9e"/><rect x="915.00" y="195.35" width="8.3" height="8.5" fill="#28276f"/><rect x="924.22" y="195.35" width="8.3" height="8.5" fill="#6b3398"/><rect x="933.44" y="195.35" width="8.3" height="8.5" fill="#8e2f91"/><rect x="942.66" y="195.35" width="8.3" height="8.5" fill="#9c2c6c"/><rect x="951.88" y="195.35" width="8.3" height="8.5" fill="#d22c5f"/><rect x="961.10" y="195.35" width="8.3" height="8.5" fill="#e13c88"/><rect x="822.80" y="204.70" width="8.3" height="8.5" fill="#cbbb9b"/><rect x="832.02" y="204.70" width="8.3" height="8.5" fill="#9f8e80"/><rect x="841.24" y="204.70" width="8.3" height="8.5" fill="#7b6b5c"/><rect x="850.46" y="204.70" width="8.3" height="8.5" fill="#5e4b3c"/><rect x="859.68" y="204.70" width="8.3" height="8.5" fill="#c79c6b"/><rect x="868.90" y="204.70" width="8.3" height="8.5" fill="#b28050"/><rect x="878.12" y="204.70" width="8.3" height="8.5" fill="#906140"/><rect x="887.34" y="204.70" width="8.3" height="8.5" fill="#7b5131"/><rect x="896.56" y="204.70" width="8.3" height="8.5" fill="#5f3a1b"/><rect x="905.78" y="204.70" width="8.3" height="8.5" fill="#3f2a1a"/><rect x="915.00" y="204.70" width="8.3" height="8.5" fill="url(#g1)"/><rect x="924.22" y="204.70" width="8.3" height="8.5" fill="url(#g2)"/><rect x="933.44" y="204.70" width="8.3" height="8.5" fill="url(#g3)"/><rect x="942.66" y="204.70" width="8.3" height="8.5" fill="#000"/><circle cx="946.81" cy="208.95" r="2.9" fill="#e0e0e0"/><circle cx="946.81" cy="208.95" r="1" fill="#999"/><rect x="951.88" y="204.70" width="8.3" height="8.5" fill="#d8ecc8"/><rect x="953.38" y="206.20" width="5.30" height="5.50" fill="#6cb84a"/><rect x="954.88" y="207.70" width="2.3" height="2.5" fill="#b8e090"/><rect x="961.10" y="204.70" width="8.3" height="8.5" fill="url(#p3)"/></svg>
<svg style="left:975px;top:188px" width="7" height="4" viewBox="0 0 7 4"><path d="M0.5 3.5 L3.5 0.8 L6.5 3.5" stroke="#9a9a9a" stroke-width="0.8" fill="none"/></svg>
<svg style="left:975px;top:208px" width="7" height="4" viewBox="0 0 7 4"><path d="M0.5 0.5 L3.5 3.2 L6.5 0.5" stroke="#9a9a9a" stroke-width="0.8" fill="none"/></svg>
<svg style="left:826px;top:217px" width="12" height="9" viewBox="0 0 12 9"><path d="M0.5 0.5V8.5M2.5 0.5V8.5M4.5 1L7 8.5" stroke="#c4c4c4" stroke-width="1"/><path d="M9 7.5H11" stroke="#c4c4c4" stroke-width="0.8"/></svg>
<svg style="left:843px;top:216.5px" width="9" height="10" viewBox="0 0 9 10"><circle cx="2" cy="5" r="1.5" fill="#c4c4c4"/><path d="M2 5L7.5 1M2 5L7.5 9" stroke="#c4c4c4" stroke-width="1"/></svg>
<svg style="left:855px;top:216.5px" width="14" height="9" viewBox="0 0 14 9"><path d="M3 8.5 C0.5 8.5 0.5 5 3 5 C3 2 6 0.5 8.5 2 C10 1 13.5 2 13 5.5 C13.5 7 13 8.5 11 8.5 Z" fill="#6e6e6e"/></svg>
<svg style="left:884px;top:216px" width="12" height="11" viewBox="0 0 12 11"><rect x="0.5" y="0.5" width="8" height="8" fill="#c4c4c4"/><path d="M3 0.5V8.5M5.8 0.5V8.5M0.5 3H8.5M0.5 5.8H8.5" stroke="#535353" stroke-width="0.7"/><path d="M10 9.5H11.5" stroke="#c4c4c4" stroke-width="0.8"/></svg>
<svg style="left:909px;top:218px" width="8" height="8" viewBox="0 0 8 8"><rect x="0.5" y="0.5" width="7" height="7" stroke="#707070" fill="none"/><rect x="2" y="2.5" width="4" height="3" fill="#707070"/></svg>
<svg style="left:925px;top:217.5px" width="10" height="8" viewBox="0 0 10 8"><path d="M0.5 1 H3.5 L4.5 2 H9.5 V7.5 H0.5 Z" fill="#c4c4c4"/><path d="M0.5 2.5H9.5" stroke="#535353" stroke-width="0.6"/></svg>
<svg style="left:944px;top:217.5px" width="8" height="8" viewBox="0 0 8 8"><path d="M0.5 0.5H7.5V7.5H3L0.5 5Z" fill="#c4c4c4"/><path d="M0.5 5H3V7.5" stroke="#535353" stroke-width="0.7" fill="none"/></svg>
<svg style="left:962px;top:217px" width="7" height="9" viewBox="0 0 7 9"><path d="M0.5 1.5H6.5M2.5 1.5V0.5H4.5V1.5M1 2.5H6V8.5H1Z" stroke="#6e6e6e" stroke-width="0.8" fill="none"/></svg>
<div class="a" style="left:819px;top:228px;width:168px;height:2px;background:#3c3c3c"></div>
<div class="a" style="left:819px;top:230px;width:168px;height:17.5px;background:#474747"></div>
<div class="a" style="left:842px;top:230px;width:1px;height:17.5px;background:#3f3f3f"></div>
<div class="t" style="left:824.5px;top:235px;font-weight:400;color:#cfcfcf">Strok</div>
<div class="a" style="left:843px;top:230px;width:44px;height:17.5px;background:#535353"></div>
<div class="t" style="left:852.5px;top:235px;font-weight:700;color:#e4e4e4">Gradient</div>
<svg style="left:845px;top:235.5px" width="5" height="7" viewBox="0 0 5 7"><path d="M0.8 2.3 L2.5 0.8 L4.2 2.3 M0.8 4.7 L2.5 6.2 L4.2 4.7" stroke="#8a8a8a" stroke-width="0.8" fill="none"/></svg>
<div class="a" style="left:910px;top:230px;width:1px;height:17.5px;background:#3f3f3f"></div>
<div class="t" style="left:892.5px;top:235px;font-weight:400;color:#cfcfcf">Tran:</div>
<div class="a" style="left:934px;top:230px;width:1px;height:17.5px;background:#3f3f3f"></div>
<div class="t" style="left:915px;top:235px;font-weight:400;color:#cfcfcf">Appe</div>
<div class="a" style="left:960px;top:230px;width:1px;height:17.5px;background:#3f3f3f"></div>
<div class="t" style="left:939px;top:235px;font-weight:400;color:#cfcfcf">Graph</div>
<svg style="left:975.5px;top:236px" width="8" height="7" viewBox="0 0 8 7"><path d="M0.3 0.8H7.3M0.3 3.3H7.3M0.3 5.8H7.3" stroke="#cfcfcf" stroke-width="0.8"/></svg>
<div class="a" style="left:822.5px;top:252px;width:20.5px;height:21px;background:#2a2a2a"></div>
<div class="a" style="left:823px;top:252.5px;width:19.5px;height:20px;background:linear-gradient(90deg,#fafafa 0%,#8a8a8a 60%,#222 90%,#050505 100%)"></div>
<svg style="left:845.5px;top:261.5px" width="4" height="3" viewBox="0 0 4 3"><path d="M0 0H4L2 2.5Z" fill="#cfcfcf"/></svg>
<div class="a" style="left:829px;top:284.3px;width:12.5px;height:12.5px;background:#fff"></div>
<div class="a" style="left:832.5px;top:287.8px;width:5.5px;height:5.5px;background:#535353"></div>
<svg style="left:829px;top:284.3px" width="13" height="13" viewBox="0 0 13 13"><path d="M0.3 12.7 L12.7 0.3" stroke="#e5231d" stroke-width="1.1"/></svg>
<div class="a" style="left:822.5px;top:277.7px;width:12.5px;height:12.5px;background:#c4955f;border:1px solid #ecdfcd"></div>
<svg style="left:826px;top:305.5px" width="10" height="9" viewBox="0 0 10 9"><rect x="0.5" y="0.5" width="4" height="3" stroke="#7a7a7a" fill="none" stroke-width="0.7"/><path d="M6 1.5L7 2.5L8 1.5" stroke="#7a7a7a" stroke-width="0.6" fill="none"/><path d="M0.5 6.5H2.5M1.5 5.5V7.5" stroke="#7a7a7a" stroke-width="0.6"/><rect x="4" y="5" width="5" height="3" stroke="#7a7a7a" fill="none" stroke-width="0.7"/></svg>
<div class="t" style="left:859.5px;top:256px;color:#d0d0d0">Type:</div>
<div class="a" style="left:879px;top:252.6px;width:48.5px;height:15px;border:1px solid #4b4b4b;border-radius:2px;background:#525252"></div>
<div class="a" style="left:894.5px;top:253px;width:1px;height:14px;background:#4b4b4b"></div>
<div class="a" style="left:911.5px;top:253px;width:1px;height:14px;background:#4b4b4b"></div>
<div class="a" style="left:881px;top:255px;width:11px;height:10.7px;border:1px solid #cfcfcf;border-radius:1px;background:linear-gradient(90deg,#2a2a2a,#f0f0f0)"></div>
<div class="a" style="left:898px;top:255px;width:11px;height:10.7px;border:1px solid #cfcfcf;border-radius:1px;background:radial-gradient(circle,#fafafa 0%,#9a9a9a 45%,#3a3a3a 100%)"></div>
<div class="a" style="left:914px;top:255px;width:11px;height:10.7px;border:1px solid #cfcfcf;border-radius:1px;background:radial-gradient(ellipse at 70% 30%,#eee 0%,#777 40%,transparent 60%),radial-gradient(ellipse at 30% 70%,#ddd 0%,#666 40%,#333 75%)"></div>
<div class="t" style="left:854.5px;top:274.5px;color:#7c7c7c">Stroke:</div>
<div class="a" style="left:879px;top:271.7px;width:44.5px;height:13.5px;border:1px solid #4d4d4d;border-radius:2px"></div>
<div class="a" style="left:893.5px;top:272.2px;width:1px;height:12.5px;background:#4d4d4d"></div>
<div class="a" style="left:908.5px;top:272.2px;width:1px;height:12.5px;background:#4d4d4d"></div>
<svg style="left:881.5px;top:274px" width="10" height="10" viewBox="0 0 10 10"><path d="M0.5 0.5H9V5H5V9" stroke="#737373" stroke-width="1" fill="none"/><rect x="5" y="1" width="4" height="4" fill="#666"/><path d="M0.5 0.5V9" stroke="#6a6a6a" stroke-width="0.6"/></svg>
<svg style="left:896.5px;top:274px" width="10" height="10" viewBox="0 0 10 10"><path d="M0.5 0.5H9V4.5H5V9H2V4.5Z" fill="#6e6e6e"/><path d="M0.5 0.5L5 4.5" stroke="#777" stroke-width="0.8"/></svg>
<svg style="left:911.5px;top:274px" width="10" height="10" viewBox="0 0 10 10"><path d="M1 1H9M1 1V9M3 3H9M3 3V9" stroke="#6e6e6e" stroke-width="1" fill="none"/></svg>

<svg style="left:866px;top:292px" width="10" height="8" viewBox="0 0 10 8"><path d="M0.5 7.5H9.5M0.5 7.5L7 0.5M5 7.5 A4 4 0 0 0 4 4.5" stroke="#8a8a8a" stroke-width="0.8" fill="none"/></svg>
<div class="a" style="left:879px;top:290px;width:51px;height:12.5px;background:#575757"></div>
<svg style="left:921px;top:294px" width="6" height="5" viewBox="0 0 6 5"><path d="M0.5 1 L3 3.5 L5.5 1" stroke="#7a7a7a" stroke-width="0.9" fill="none"/></svg>
<svg style="left:865px;top:307px" width="12" height="11" viewBox="0 0 12 11"><path d="M1 0.5V10.5M0 1.5L1 0.5L2 1.5M0 9.5L1 10.5L2 9.5" stroke="#8a8a8a" stroke-width="0.8" fill="none"/><ellipse cx="7.5" cy="5.5" rx="3.7" ry="2.7" stroke="#8a8a8a" stroke-width="0.9" fill="none"/><path d="M3 10H11M3 1H11" stroke="#8a8a8a" stroke-width="0.6"/></svg>
<div class="a" style="left:879px;top:306.5px;width:51px;height:12.5px;background:#575757"></div>
<svg style="left:921px;top:310.5px" width="6" height="5" viewBox="0 0 6 5"><path d="M0.5 1 L3 3.5 L5.5 1" stroke="#7a7a7a" stroke-width="0.9" fill="none"/></svg>
<div class="a" style="left:828.5px;top:333.5px;width:133px;height:10px;background:#2a2a2a"></div>
<div class="a" style="left:829px;top:334px;width:132px;height:9px;background:linear-gradient(90deg,#fafafa 0%,#b0b0b0 35%,#6a6a6a 70%,#222 92%,#000 100%)"></div>
<svg style="left:971px;top:336px" width="7" height="8" viewBox="0 0 7 8"><path d="M0.3 1.3H6.7M2.5 1.3V0.4H4.5V1.3M1 2H6V7.6H1Z" stroke="#6e6e6e" stroke-width="0.8" fill="none"/><path d="M2.5 3V6.5M4.5 3V6.5" stroke="#6e6e6e" stroke-width="0.5"/></svg>
<svg style="left:826px;top:366px" width="11" height="11" viewBox="0 0 11 11"><path d="M8 0.8 L10.2 3 L8.8 4.4 L6.6 2.2 Z" fill="#7a7a7a"/><path d="M7.5 3.5 L2 9 L1 10.2 L0.8 10 L1.8 9 L7 3.5" stroke="#7a7a7a" stroke-width="0.9" fill="none"/></svg>
<div class="t" style="left:851px;top:360px;color:#7c7c7c">Opacity:</div>
<div class="a" style="left:879px;top:357px;width:51px;height:13px;background:#575757"></div>
<svg style="left:921px;top:361.5px" width="6" height="5" viewBox="0 0 6 5"><path d="M0.5 1 L3 3.5 L5.5 1" stroke="#7a7a7a" stroke-width="0.9" fill="none"/></svg>
<div class="t" style="left:848px;top:377px;color:#7c7c7c">Location:</div>
<div class="a" style="left:879px;top:374.5px;width:51px;height:12.5px;background:#575757"></div>
<svg style="left:921px;top:378.5px" width="6" height="5" viewBox="0 0 6 5"><path d="M0.5 1 L3 3.5 L5.5 1" stroke="#7a7a7a" stroke-width="0.9" fill="none"/></svg>
<div class="a" style="left:819px;top:391px;width:168px;height:2px;background:#3c3c3c"></div>
<div class="a" style="left:819px;top:393px;width:168px;height:17.5px;background:#474747"></div>
<div class="a" style="left:819px;top:393px;width:33px;height:17.5px;background:#535353"></div>
<div class="t" style="left:824.5px;top:398px;font-weight:700;color:#e4e4e4">Layers</div>
<div class="a" style="left:906px;top:393px;width:1px;height:17.5px;background:#3f3f3f"></div>
<div class="t" style="left:858.5px;top:398px;font-weight:400;color:#cfcfcf">Asset Export</div>
<div class="a" style="left:952.5px;top:393px;width:1px;height:17.5px;background:#3f3f3f"></div>
<div class="t" style="left:913.5px;top:398px;font-weight:400;color:#cfcfcf">Artboards</div>
<svg style="left:975.5px;top:399px" width="8" height="7" viewBox="0 0 8 7"><path d="M0.3 0.8H7.3M0.3 3.3H7.3M0.3 5.8H7.3" stroke="#cfcfcf" stroke-width="0.8"/></svg>
<div class="a" style="left:822.5px;top:415px;width:152px;height:138px;background:#535353"></div>
<div class="a" style="left:822.5px;top:428.58px;width:152px;height:1px;background:#4a4a4a"></div>
<div class="a" style="left:836.5px;top:415.20px;width:1px;height:13.88px;background:#4b4b4b"></div>
<div class="a" style="left:849.6px;top:415.20px;width:1px;height:13.88px;background:#4b4b4b"></div>
<div class="a" style="left:951.5px;top:415.20px;width:1px;height:13.88px;background:#4b4b4b"></div>
<svg style="left:825px;top:419.40px" width="9" height="6" viewBox="0 0 9 6"><path d="M0.5 3 C2.5 0 6.5 0 8.5 3 C6.5 6 2.5 6 0.5 3 Z" fill="#d8d8d8"/><circle cx="4.5" cy="3" r="1.6" fill="#535353"/><circle cx="4.5" cy="3" r="0.8" fill="#d8d8d8"/></svg>
<svg style="left:840px;top:418.00px" width="7" height="8" viewBox="0 0 7 8"><path d="M1.5 3.5V2.5C1.5 0.5 5.5 0.5 5.5 2.5V3.5" stroke="#d4d4d4" stroke-width="1" fill="none"/><rect x="0.5" y="3.5" width="6" height="4.2" fill="#d4d4d4"/><rect x="3" y="4.8" width="1" height="1.6" fill="#535353"/></svg>
<div class="a" style="left:851px;top:416.20px;width:2.3px;height:11.88px;background:#ea5a4e"></div>
<svg style="left:859px;top:420.40px" width="6" height="4" viewBox="0 0 6 4"><path d="M0.5 0.7 L3 3.2 L5.5 0.7" stroke="#cfcfcf" stroke-width="0.9" fill="none"/></svg>
<div class="a" style="left:870px;top:416.30px;width:12.5px;height:11.7px;background:#1e1e1e;border-radius:1px"></div>
<div class="a" style="left:871px;top:417.30px;width:10.5px;height:9.7px;background:#fff"></div>
<div class="t" style="left:885.5px;top:418.60px;color:#d6d6d6;letter-spacing:0.1px">illustration...</div>
<svg style="left:954.5px;top:418.70px" width="7" height="7" viewBox="0 0 7 7"><circle cx="3.5" cy="3.5" r="2.9" stroke="#d0d0d0" stroke-width="0.8" fill="none"/></svg>
<div class="a" style="left:822.5px;top:442.46px;width:152px;height:1px;background:#4a4a4a"></div>
<div class="a" style="left:836.5px;top:429.08px;width:1px;height:13.88px;background:#4b4b4b"></div>
<div class="a" style="left:849.6px;top:429.08px;width:1px;height:13.88px;background:#4b4b4b"></div>
<div class="a" style="left:951.5px;top:429.08px;width:1px;height:13.88px;background:#4b4b4b"></div>
<svg style="left:840px;top:431.88px" width="7" height="8" viewBox="0 0 7 8"><path d="M1.5 3.5V2.5C1.5 0.5 5.5 0.5 5.5 2.5V3.5" stroke="#6a6a6a" stroke-width="1" fill="none"/><rect x="0.5" y="3.5" width="6" height="4.2" fill="#6a6a6a"/><rect x="3" y="4.8" width="1" height="1.6" fill="#535353"/></svg>
<div class="a" style="left:851px;top:430.08px;width:2.3px;height:11.88px;background:#a8421c"></div>
<svg style="left:873.5px;top:433.28px" width="4" height="6" viewBox="0 0 4 6"><path d="M0.7 0.5 L3.2 3 L0.7 5.5" stroke="#cfcfcf" stroke-width="0.9" fill="none"/></svg>
<div class="a" style="left:885px;top:430.18px;width:12.5px;height:11.7px;background:#1e1e1e;border-radius:1px"></div>
<div class="a" style="left:886px;top:431.18px;width:10.5px;height:9.7px;background:#fff"><svg style="left:0;top:0" width="11" height="10" viewBox="0 0 11 10"><path d="M1 3.5 L3 5 L5 3 L7 5 L9.5 3.5" stroke="#3a1a10" stroke-width="1.4" fill="none" stroke-dasharray="1 0.5"/><path d="M3 6 L6 4.5" stroke="#3a1a10" stroke-width="0.8"/></svg></div>
<div class="t" style="left:900.5px;top:432.48px;color:#d6d6d6;letter-spacing:0.1px">Pearls</div>
<svg style="left:954.5px;top:432.58px" width="7" height="7" viewBox="0 0 7 7"><circle cx="3.5" cy="3.5" r="2.9" stroke="#d0d0d0" stroke-width="0.8" fill="none"/></svg>
<div class="a" style="left:822.5px;top:456.34px;width:152px;height:1px;background:#4a4a4a"></div>
<div class="a" style="left:836.5px;top:442.96px;width:1px;height:13.88px;background:#4b4b4b"></div>
<div class="a" style="left:849.6px;top:442.96px;width:1px;height:13.88px;background:#4b4b4b"></div>
<div class="a" style="left:951.5px;top:442.96px;width:1px;height:13.88px;background:#4b4b4b"></div>
<svg style="left:840px;top:445.76px" width="7" height="8" viewBox="0 0 7 8"><path d="M1.5 3.5V2.5C1.5 0.5 5.5 0.5 5.5 2.5V3.5" stroke="#6a6a6a" stroke-width="1" fill="none"/><rect x="0.5" y="3.5" width="6" height="4.2" fill="#6a6a6a"/><rect x="3" y="4.8" width="1" height="1.6" fill="#535353"/></svg>
<div class="a" style="left:851px;top:443.96px;width:2.3px;height:11.88px;background:#f27a2a"></div>
<svg style="left:873.5px;top:447.16px" width="4" height="6" viewBox="0 0 4 6"><path d="M0.7 0.5 L3.2 3 L0.7 5.5" stroke="#cfcfcf" stroke-width="0.9" fill="none"/></svg>
<div class="a" style="left:885px;top:444.06px;width:12.5px;height:11.7px;background:#1e1e1e;border-radius:1px"></div>
<div class="a" style="left:886px;top:445.06px;width:10.5px;height:9.7px;background:#fff"><div class="a" style="left:1.5px;top:0.5px;width:7.5px;height:8.7px;border-radius:0 0 2px 2px;background:linear-gradient(180deg,#d8b880,#b89868 60%,#3a2a18)"></div></div>
<div class="t" style="left:900.5px;top:446.36px;color:#d6d6d6;letter-spacing:0.1px">Cup</div>
<svg style="left:954.5px;top:446.46px" width="7" height="7" viewBox="0 0 7 7"><circle cx="3.5" cy="3.5" r="2.9" stroke="#d0d0d0" stroke-width="0.8" fill="none"/></svg>
<div class="a" style="left:822.5px;top:456.84px;width:152px;height:13.88px;background:#4c5e74"></div>
<svg style="left:970px;top:457.84px" width="4" height="4" viewBox="0 0 4 4"><path d="M0 0H4V4Z" fill="#e8e8e8"/></svg>
<div class="a" style="left:822.5px;top:470.22px;width:152px;height:1px;background:#4a4a4a"></div>
<div class="a" style="left:836.5px;top:456.84px;width:1px;height:13.88px;background:#4b4b4b"></div>
<div class="a" style="left:849.6px;top:456.84px;width:1px;height:13.88px;background:#4b4b4b"></div>
<div class="a" style="left:951.5px;top:456.84px;width:1px;height:13.88px;background:#4b4b4b"></div>
<svg style="left:825px;top:461.04px" width="9" height="6" viewBox="0 0 9 6"><path d="M0.5 3 C2.5 0 6.5 0 8.5 3 C6.5 6 2.5 6 0.5 3 Z" fill="#d8d8d8"/><circle cx="4.5" cy="3" r="1.6" fill="#4c5e74"/><circle cx="4.5" cy="3" r="0.8" fill="#d8d8d8"/></svg>
<svg style="left:840px;top:459.64px" width="7" height="8" viewBox="0 0 7 8"><path d="M1.5 3.5V2.5C1.5 0.5 5.5 0.5 5.5 2.5V3.5" stroke="#6a6a6a" stroke-width="1" fill="none"/><rect x="0.5" y="3.5" width="6" height="4.2" fill="#6a6a6a"/><rect x="3" y="4.8" width="1" height="1.6" fill="#4c5e74"/></svg>
<div class="a" style="left:851px;top:457.84px;width:2.3px;height:11.88px;background:#2aa9a0"></div>
<svg style="left:873.5px;top:461.04px" width="4" height="6" viewBox="0 0 4 6"><path d="M0.7 0.5 L3.2 3 L0.7 5.5" stroke="#cfcfcf" stroke-width="0.9" fill="none"/></svg>
<div class="a" style="left:885px;top:457.94px;width:12.5px;height:11.7px;background:#1e1e1e;border-radius:1px"></div>
<div class="a" style="left:886px;top:458.94px;width:10.5px;height:9.7px;background:#fff"></div>
<div class="t" style="left:900.5px;top:460.24px;color:#d6d6d6;letter-spacing:0.1px">lidOutl...</div>
<svg style="left:954.5px;top:460.34px" width="7" height="7" viewBox="0 0 7 7"><circle cx="3.5" cy="3.5" r="2.9" stroke="#d0d0d0" stroke-width="0.8" fill="none"/></svg>
<div class="a" style="left:822.5px;top:484.10px;width:152px;height:1px;background:#4a4a4a"></div>
<div class="a" style="left:836.5px;top:470.72px;width:1px;height:13.88px;background:#4b4b4b"></div>
<div class="a" style="left:849.6px;top:470.72px;width:1px;height:13.88px;background:#4b4b4b"></div>
<div class="a" style="left:951.5px;top:470.72px;width:1px;height:13.88px;background:#4b4b4b"></div>
<svg style="left:825px;top:474.92px" width="9" height="6" viewBox="0 0 9 6"><path d="M0.5 3 C2.5 0 6.5 0 8.5 3 C6.5 6 2.5 6 0.5 3 Z" fill="#d8d8d8"/><circle cx="4.5" cy="3" r="1.6" fill="#535353"/><circle cx="4.5" cy="3" r="0.8" fill="#d8d8d8"/></svg>
<svg style="left:840px;top:473.52px" width="7" height="8" viewBox="0 0 7 8"><path d="M1.5 3.5V2.5C1.5 0.5 5.5 0.5 5.5 2.5V3.5" stroke="#6a6a6a" stroke-width="1" fill="none"/><rect x="0.5" y="3.5" width="6" height="4.2" fill="#6a6a6a"/><rect x="3" y="4.8" width="1" height="1.6" fill="#535353"/></svg>
<div class="a" style="left:851px;top:471.72px;width:2.3px;height:11.88px;background:#e245e0"></div>
<svg style="left:873.5px;top:474.92px" width="4" height="6" viewBox="0 0 4 6"><path d="M0.7 0.5 L3.2 3 L0.7 5.5" stroke="#cfcfcf" stroke-width="0.9" fill="none"/></svg>
<div class="a" style="left:885px;top:471.82px;width:12.5px;height:11.7px;background:#1e1e1e;border-radius:1px"></div>
<div class="a" style="left:886px;top:472.82px;width:10.5px;height:9.7px;background:#fff"></div>
<div class="t" style="left:900.5px;top:474.12px;color:#d6d6d6;letter-spacing:0.1px">Cap</div>
<svg style="left:954.5px;top:474.22px" width="7" height="7" viewBox="0 0 7 7"><circle cx="3.5" cy="3.5" r="2.9" stroke="#d0d0d0" stroke-width="0.8" fill="none"/></svg>
<div class="a" style="left:822.5px;top:497.98px;width:152px;height:1px;background:#4a4a4a"></div>
<div class="a" style="left:836.5px;top:484.60px;width:1px;height:13.88px;background:#4b4b4b"></div>
<div class="a" style="left:849.6px;top:484.60px;width:1px;height:13.88px;background:#4b4b4b"></div>
<div class="a" style="left:951.5px;top:484.60px;width:1px;height:13.88px;background:#4b4b4b"></div>
<svg style="left:840px;top:487.40px" width="7" height="8" viewBox="0 0 7 8"><path d="M1.5 3.5V2.5C1.5 0.5 5.5 0.5 5.5 2.5V3.5" stroke="#6a6a6a" stroke-width="1" fill="none"/><rect x="0.5" y="3.5" width="6" height="4.2" fill="#6a6a6a"/><rect x="3" y="4.8" width="1" height="1.6" fill="#535353"/></svg>
<div class="a" style="left:851px;top:485.60px;width:2.3px;height:11.88px;background:#45e0f0"></div>
<svg style="left:873.5px;top:488.80px" width="4" height="6" viewBox="0 0 4 6"><path d="M0.7 0.5 L3.2 3 L0.7 5.5" stroke="#cfcfcf" stroke-width="0.9" fill="none"/></svg>
<div class="a" style="left:885px;top:485.70px;width:12.5px;height:11.7px;background:#1e1e1e;border-radius:1px"></div>
<div class="a" style="left:886px;top:486.70px;width:10.5px;height:9.7px;background:#fff"><div class="a" style="left:4.5px;top:0;width:1px;height:9.5px;background:#bbb;transform:rotate(-8deg)"></div></div>
<div class="t" style="left:900.5px;top:488.00px;color:#d6d6d6;letter-spacing:0.1px">Straw</div>
<svg style="left:954.5px;top:488.10px" width="7" height="7" viewBox="0 0 7 7"><circle cx="3.5" cy="3.5" r="2.9" stroke="#d0d0d0" stroke-width="0.8" fill="none"/></svg>
<div class="a" style="left:822.5px;top:511.86px;width:152px;height:1px;background:#4a4a4a"></div>
<div class="a" style="left:836.5px;top:498.48px;width:1px;height:13.88px;background:#4b4b4b"></div>
<div class="a" style="left:849.6px;top:498.48px;width:1px;height:13.88px;background:#4b4b4b"></div>
<div class="a" style="left:951.5px;top:498.48px;width:1px;height:13.88px;background:#4b4b4b"></div>
<svg style="left:840px;top:501.28px" width="7" height="8" viewBox="0 0 7 8"><path d="M1.5 3.5V2.5C1.5 0.5 5.5 0.5 5.5 2.5V3.5" stroke="#d4d4d4" stroke-width="1" fill="none"/><rect x="0.5" y="3.5" width="6" height="4.2" fill="#d4d4d4"/><rect x="3" y="4.8" width="1" height="1.6" fill="#535353"/></svg>
<div class="a" style="left:851px;top:499.48px;width:2.3px;height:11.88px;background:#4a4aea"></div>
<svg style="left:873.5px;top:502.68px" width="4" height="6" viewBox="0 0 4 6"><path d="M0.7 0.5 L3.2 3 L0.7 5.5" stroke="#cfcfcf" stroke-width="0.9" fill="none"/></svg>
<div class="a" style="left:885px;top:499.58px;width:12.5px;height:11.7px;background:#1e1e1e;border-radius:1px"></div>
<div class="a" style="left:886px;top:500.58px;width:10.5px;height:9.7px;background:linear-gradient(90deg,#d8d0c0 0 12%,#4a3a28 12% 28%,#b88848 28% 50%,#6a4a28 50% 72%,#d8c8a8 72% 85%,#3a3028 85%)"></div>
<div class="t" style="left:900.5px;top:501.88px;color:#d6d6d6;letter-spacing:0.1px">ref</div>
<svg style="left:954.5px;top:501.98px" width="7" height="7" viewBox="0 0 7 7"><circle cx="3.5" cy="3.5" r="2.9" stroke="#d0d0d0" stroke-width="0.8" fill="none"/></svg>
<div class="a" style="left:822.5px;top:525.74px;width:152px;height:1px;background:#4a4a4a"></div>
<div class="a" style="left:836.5px;top:512.36px;width:1px;height:13.88px;background:#4b4b4b"></div>
<div class="a" style="left:849.6px;top:512.36px;width:1px;height:13.88px;background:#4b4b4b"></div>
<div class="a" style="left:951.5px;top:512.36px;width:1px;height:13.88px;background:#4b4b4b"></div>
<svg style="left:840px;top:515.16px" width="7" height="8" viewBox="0 0 7 8"><path d="M1.5 3.5V2.5C1.5 0.5 5.5 0.5 5.5 2.5V3.5" stroke="#d4d4d4" stroke-width="1" fill="none"/><rect x="0.5" y="3.5" width="6" height="4.2" fill="#d4d4d4"/><rect x="3" y="4.8" width="1" height="1.6" fill="#535353"/></svg>
<div class="a" style="left:851px;top:513.36px;width:2.3px;height:11.88px;background:#8e8e8e"></div>
<svg style="left:859px;top:516.56px" width="4" height="6" viewBox="0 0 4 6"><path d="M0.7 0.5 L3.2 3 L0.7 5.5" stroke="#cfcfcf" stroke-width="0.9" fill="none"/></svg>
<div class="a" style="left:870px;top:513.46px;width:12.5px;height:11.7px;background:#1e1e1e;border-radius:1px"></div>
<div class="a" style="left:871px;top:514.46px;width:10.5px;height:9.7px;background:#fff"><div class="a" style="left:3px;top:3.5px;width:5px;height:5px;border-radius:0 0 3px 3px;background:#ecd0b0"></div><div class="a" style="left:5px;top:0.5px;width:1px;height:3px;background:#ccc"></div></div>
<div class="t" style="left:885.5px;top:515.76px;color:#d6d6d6;letter-spacing:0.1px">backup</div>
<svg style="left:954.5px;top:515.86px" width="7" height="7" viewBox="0 0 7 7"><circle cx="3.5" cy="3.5" r="2.9" stroke="#d0d0d0" stroke-width="0.8" fill="none"/></svg>
<div class="a" style="left:822.5px;top:539.62px;width:152px;height:1px;background:#4a4a4a"></div>
<div class="a" style="left:836.5px;top:526.24px;width:1px;height:13.88px;background:#4b4b4b"></div>
<div class="a" style="left:849.6px;top:526.24px;width:1px;height:13.88px;background:#4b4b4b"></div>
<div class="a" style="left:951.5px;top:526.24px;width:1px;height:13.88px;background:#4b4b4b"></div>
<svg style="left:840px;top:529.04px" width="7" height="8" viewBox="0 0 7 8"><path d="M1.5 3.5V2.5C1.5 0.5 5.5 0.5 5.5 2.5V3.5" stroke="#d4d4d4" stroke-width="1" fill="none"/><rect x="0.5" y="3.5" width="6" height="4.2" fill="#d4d4d4"/><rect x="3" y="4.8" width="1" height="1.6" fill="#535353"/></svg>
<div class="a" style="left:851px;top:527.24px;width:2.3px;height:11.88px;background:#5a86ea"></div>
<svg style="left:859px;top:530.44px" width="4" height="6" viewBox="0 0 4 6"><path d="M0.7 0.5 L3.2 3 L0.7 5.5" stroke="#cfcfcf" stroke-width="0.9" fill="none"/></svg>
<div class="a" style="left:870px;top:527.34px;width:12.5px;height:11.7px;background:#1e1e1e;border-radius:1px"></div>
<div class="a" style="left:871px;top:528.34px;width:10.5px;height:9.7px;background:linear-gradient(90deg,#d8d0c0 0 12%,#4a3a28 12% 28%,#b88848 28% 50%,#6a4a28 50% 72%,#d8c8a8 72% 85%,#3a3028 85%)"></div>
<div class="t" style="left:885.5px;top:529.64px;color:#d6d6d6;letter-spacing:0.1px">image</div>
<svg style="left:954.5px;top:529.74px" width="7" height="7" viewBox="0 0 7 7"><circle cx="3.5" cy="3.5" r="2.9" stroke="#d0d0d0" stroke-width="0.8" fill="none"/></svg>
<div class="a" style="left:822.5px;top:553.50px;width:152px;height:1px;background:#4a4a4a"></div>
<div class="a" style="left:836.5px;top:540.12px;width:1px;height:13.88px;background:#4b4b4b"></div>
<div class="a" style="left:849.6px;top:540.12px;width:1px;height:13.88px;background:#4b4b4b"></div>
<div class="a" style="left:951.5px;top:540.12px;width:1px;height:13.88px;background:#4b4b4b"></div>
<svg style="left:840px;top:542.92px" width="7" height="8" viewBox="0 0 7 8"><path d="M1.5 3.5V2.5C1.5 0.5 5.5 0.5 5.5 2.5V3.5" stroke="#d4d4d4" stroke-width="1" fill="none"/><rect x="0.5" y="3.5" width="6" height="4.2" fill="#d4d4d4"/><rect x="3" y="4.8" width="1" height="1.6" fill="#535353"/></svg>
<div class="a" style="left:851px;top:541.12px;width:2.3px;height:11.88px;background:#1b6a1b"></div>
<svg style="left:859px;top:544.32px" width="4" height="6" viewBox="0 0 4 6"><path d="M0.7 0.5 L3.2 3 L0.7 5.5" stroke="#cfcfcf" stroke-width="0.9" fill="none"/></svg>
<div class="a" style="left:870px;top:541.22px;width:12.5px;height:11.7px;background:#1e1e1e;border-radius:1px"></div>
<div class="a" style="left:871px;top:542.22px;width:10.5px;height:9.7px;background:#fbf4c8"></div>
<div class="t" style="left:885.5px;top:543.52px;color:#d6d6d6;letter-spacing:0.1px">bg2</div>
<svg style="left:954.5px;top:543.62px" width="7" height="7" viewBox="0 0 7 7"><circle cx="3.5" cy="3.5" r="2.9" stroke="#d0d0d0" stroke-width="0.8" fill="none"/></svg>
<div class="a" style="left:975px;top:415px;width:7.5px;height:138px;background:#4f4f4f"></div>
<div class="a" style="left:976px;top:424px;width:5.5px;height:111px;border-radius:3px;background:#5e5e5e"></div>
<svg style="left:975px;top:416.5px" width="7" height="4" viewBox="0 0 7 4"><path d="M0.5 3.5 L3.5 0.8 L6.5 3.5" stroke="#9a9a9a" stroke-width="0.8" fill="none"/></svg>
<svg style="left:975px;top:548px" width="7" height="4" viewBox="0 0 7 4"><path d="M0.5 0.5 L3.5 3.2 L6.5 0.5" stroke="#9a9a9a" stroke-width="0.8" fill="none"/></svg>
<div class="t" style="left:822.5px;top:557px;color:#d4d4d4">5 Layers</div>
<svg style="left:875px;top:556.5px" width="9" height="9" viewBox="0 0 9 9"><path d="M4 0.5H0.5V8.5H8.5V5" stroke="#c4c4c4" stroke-width="0.9" fill="none"/><path d="M4 5L8.5 0.5M5.5 0.5H8.5V3.5" stroke="#c4c4c4" stroke-width="0.9" fill="none"/></svg>
<svg style="left:892px;top:556.5px" width="9" height="9" viewBox="0 0 9 9"><circle cx="5.5" cy="3.5" r="2.8" stroke="#6e6e6e" stroke-width="0.9" fill="none"/><path d="M3.5 5.5L0.5 8.5" stroke="#6e6e6e" stroke-width="1.1"/></svg>
<svg style="left:909px;top:556.5px" width="9" height="9" viewBox="0 0 9 9"><rect x="0.5" y="0.5" width="6" height="6" stroke="#c4c4c4" stroke-width="0.9" fill="none"/><rect x="2.5" y="2.5" width="6" height="6" stroke="#c4c4c4" stroke-width="0.9" fill="none"/><rect x="2.5" y="2.5" width="4" height="4" fill="#c4c4c4"/></svg>
<svg style="left:925px;top:556.5px" width="10" height="9" viewBox="0 0 10 9"><path d="M0.5 3H3M1.5 1.5V4.5" stroke="#c4c4c4" stroke-width="0.8"/><rect x="3.5" y="2" width="6" height="6" fill="#c4c4c4"/><path d="M5 2V8M7 2V8" stroke="#535353" stroke-width="0.6"/></svg>
<svg style="left:944px;top:556.5px" width="8" height="8" viewBox="0 0 8 8"><path d="M0.5 0.5H7.5V7.5H3L0.5 5Z" fill="#c4c4c4"/><path d="M0.5 5H3V7.5" stroke="#535353" stroke-width="0.7" fill="none"/></svg>
<svg style="left:962px;top:556px" width="7" height="9" viewBox="0 0 7 9"><path d="M0.5 1.5H6.5M2.5 1.5V0.5H4.5V1.5M1 2.5H6V8.5H1Z" stroke="#c4c4c4" stroke-width="0.9" fill="none"/><path d="M2.8 3.5V7.5M4.2 3.5V7.5" stroke="#c4c4c4" stroke-width="0.5"/></svg>
</body></html>
